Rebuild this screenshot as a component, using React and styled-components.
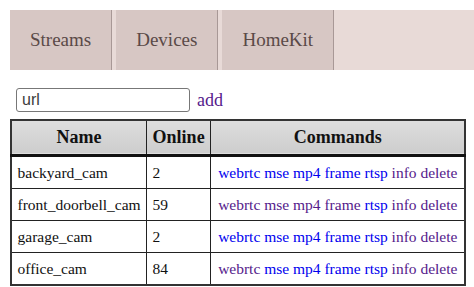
import React from 'react';
import styled, { createGlobalStyle } from 'styled-components';

const GlobalStyle = createGlobalStyle`
    html, body {
        margin: 0;
        padding: 0;
        background: #fff;
        font-family: "Liberation Serif", "Times New Roman", serif;
        overflow: hidden;
    }
`;

const Page = styled.div`
    padding: 10px 0 0 10px;
`;

const Nav = styled.nav`
    display: flex;
    height: 60px;
    background: #e8dad7;
`;

const Tab = styled.a`
    display: flex;
    align-items: center;
    padding: 0 20px;
    margin-right: 4px;
    background: #d7c7c4;
    border-right: 1px solid #a89896;
    color: #5a4a48;
    font-size: 19px;
    text-decoration: none;
    cursor: pointer;
`;

const AddRow = styled.div`
    display: flex;
    align-items: center;
    gap: 7px;
    margin-top: 18px;
    padding-left: 6px;
`;

const UrlInput = styled.input`
    box-sizing: border-box;
    width: 174px;
    height: 24px;
    padding: 0 5px;
    border: 1px solid #777;
    border-radius: 3px;
    font-family: "Liberation Sans", Arial, sans-serif;
    font-size: 16px;
    color: #333;

    &::placeholder {
        color: #3c3c3c;
    }
`;

const Link = styled.a`
    color: ${(p) => (p.$visited ? '#551a8b' : '#0000ee')};
    text-decoration: none;
    cursor: pointer;
`;

const AddLink = styled(Link)`
    font-size: 18px;
`;

const Table = styled.table`
    margin-top: 7px;
    border-collapse: collapse;
    border: 2px solid #333;
    background: #fff;
    text-align: left;
`;

const Head = styled.thead`
    background: linear-gradient(to bottom, #dedede 0%, #d3d3d3 66%, #cdcdcd 100%);
    border-bottom: 3px solid #111;
`;

const Th = styled.th`
    height: 33px;
    padding: 0 ${(p) => (p.$wide ? 7 : 5.5)}px;
    border: 1px solid #222;
    font-size: 18px;
    font-weight: bold;
    color: #111;
    text-align: center;
`;

const Td = styled.td`
    height: 31px;
    padding: 0 ${(p) => (p.$wide ? 7 : 5.5)}px;
    border: 1px solid #222;
    font-size: 15.5px;
    color: #111;
    white-space: nowrap;
`;

const Commands = styled.span`
    display: inline-flex;
    gap: 0.25em;
`;

const streams = [
    { name: 'backyard_cam', online: 2, visited: ['info', 'delete'] },
    { name: 'front_doorbell_cam', online: 59, visited: ['webrtc', 'mse', 'mp4', 'frame', 'info', 'delete'] },
    { name: 'garage_cam', online: 2, visited: ['info', 'delete'] },
    { name: 'office_cam', online: 84, visited: ['webrtc', 'info', 'delete'] },
];

const commands = ['webrtc', 'mse', 'mp4', 'frame', 'rtsp', 'info', 'delete'];

export default function App() {
    return (
        <Page>
            <GlobalStyle />
            <Nav>
                <Tab>Streams</Tab>
                <Tab>Devices</Tab>
                <Tab>HomeKit</Tab>
            </Nav>

            <AddRow>
                <UrlInput placeholder="url" />
                <AddLink $visited>add</AddLink>
            </AddRow>

            <Table>
                <Head>
                    <tr>
                        <Th>Name</Th>
                        <Th>Online</Th>
                        <Th $wide>Commands</Th>
                    </tr>
                </Head>
                <tbody>
                    {streams.map((s) => (
                        <tr key={s.name}>
                            <Td>{s.name}</Td>
                            <Td>{s.online}</Td>
                            <Td $wide>
                                <Commands>
                                    {commands.map((c) => (
                                        <Link key={c} $visited={s.visited.includes(c)}>{c}</Link>
                                    ))}
                                </Commands>
                            </Td>
                        </tr>
                    ))}
                </tbody>
            </Table>
        </Page>
    );
}
